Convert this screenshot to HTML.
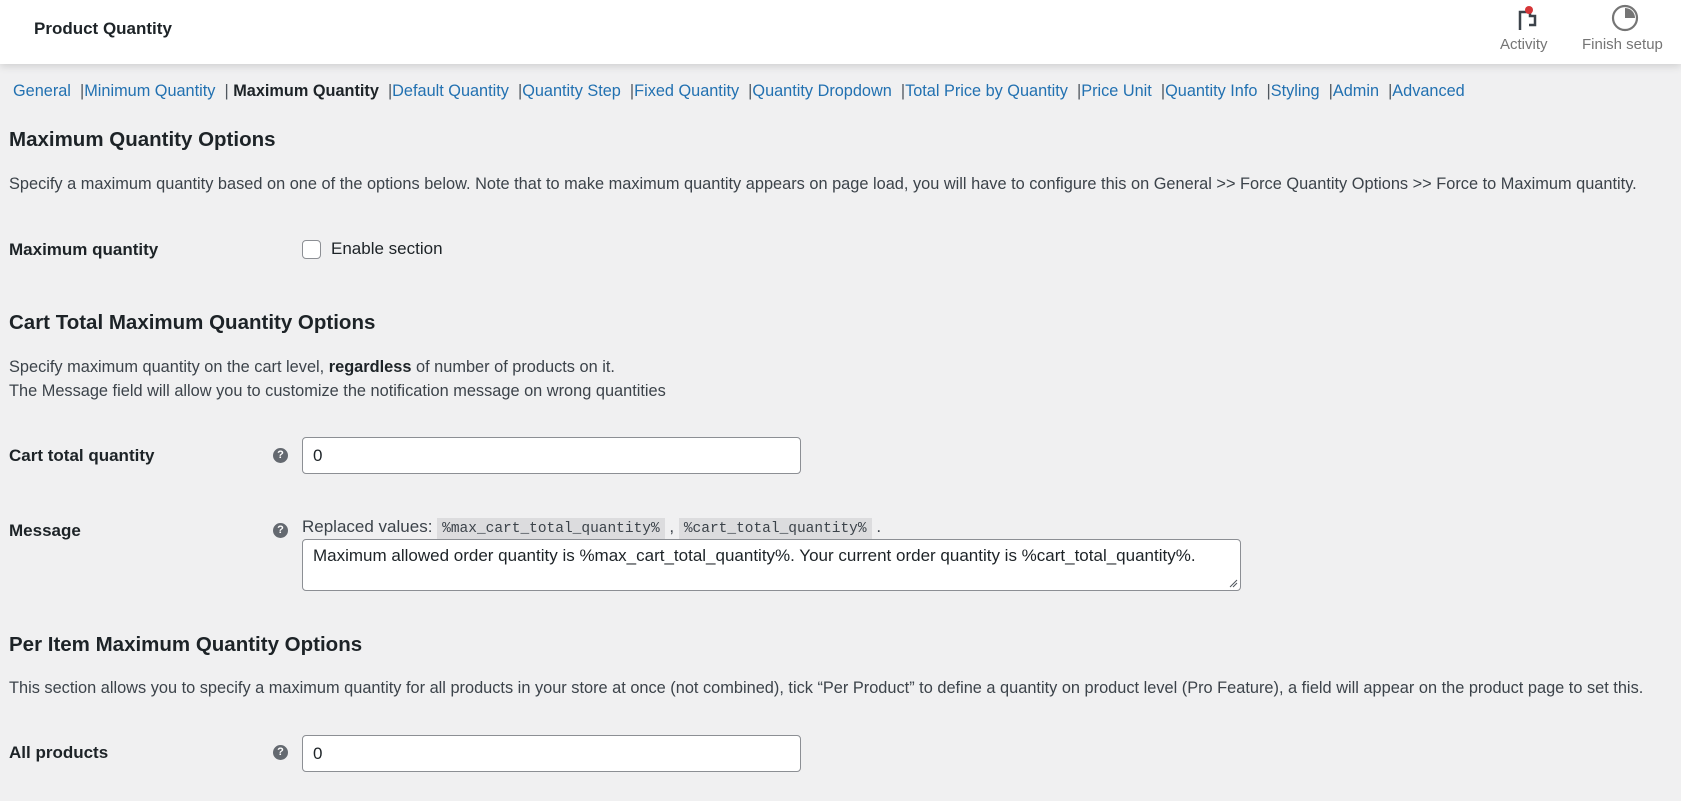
<!DOCTYPE html>
<html><head><meta charset="utf-8"><style>
*{box-sizing:border-box;margin:0;padding:0}
body{width:1681px;height:801px;overflow:hidden;background:#f0f0f1;font-family:"Liberation Sans",sans-serif;color:#1d2327;position:relative}
.hdr{position:absolute;left:0;top:0;width:1681px;height:64px;background:#fff;box-shadow:0 2px 8px rgba(0,0,0,.15)}
.a{position:absolute;white-space:nowrap}
.nav{position:absolute;left:13px;top:82px;font-size:16.3px;color:#50575e;white-space:nowrap}
.nav a{color:#2271b1;text-decoration:none}
.nav b{font-weight:bold;color:#1d2327}
h2{position:absolute;left:9px;font-size:20.5px;font-weight:600;white-space:nowrap}
.d{position:absolute;left:9px;font-size:16.35px;color:#3c434a;white-space:nowrap}
.lbl{position:absolute;left:9px;font-size:17px;font-weight:bold;color:#1d2327}
.q{position:absolute;left:273px;width:15px;height:15px;border-radius:50%;background:#646970;color:#fff;font-size:11px;font-weight:bold;text-align:center;line-height:15px}
.inp{position:absolute;left:302px;width:499px;height:37px;background:#fff;border:1px solid #8c8f94;border-radius:4px;font-size:17px;padding:8px 10px}
code{background:#dcdcde;font-family:"Liberation Mono",monospace;font-size:14.5px;padding:3px 5px}
</style></head><body>
<div class="hdr">
<div class="a" style="left:34px;top:19px;font-size:17px;font-weight:600">Product Quantity</div>
<svg class="a" style="left:1515px;top:4px" width="24" height="28" viewBox="0 0 24 28"><path d="M5 26V8h10v4h5v9h-6" fill="none" stroke="#3c434a" stroke-width="2.5"/><circle cx="14" cy="6" r="4" fill="#d63638"/></svg>
<div class="a" style="left:1500px;top:36px;font-size:15px;color:#757575">Activity</div>
<svg class="a" style="left:1610px;top:3px" width="30" height="30" viewBox="0 0 30 30"><circle cx="15" cy="15" r="12" fill="none" stroke="#757575" stroke-width="2.2"/><path d="M15 5A10 10 0 0 1 25 15H15Z" fill="#757575"/></svg>
<div class="a" style="left:1582px;top:36px;font-size:15px;color:#757575">Finish setup</div>
</div>
<div class="nav"><a>General</a> &nbsp;|<a>Minimum Quantity</a> &nbsp;|&nbsp;<b>Maximum Quantity</b> &nbsp;|<a>Default Quantity</a> &nbsp;|<a>Quantity Step</a> &nbsp;|<a>Fixed Quantity</a> &nbsp;|<a>Quantity Dropdown</a> &nbsp;|<a>Total Price by Quantity</a> &nbsp;|<a>Price Unit</a> &nbsp;|<a>Quantity Info</a> &nbsp;|<a>Styling</a> &nbsp;|<a>Admin</a> &nbsp;|<a>Advanced</a></div>
<h2 style="top:128px">Maximum Quantity Options</h2>
<div class="d" style="top:175px">Specify a maximum quantity based on one of the options below. Note that to make maximum quantity appears on page load, you will have to configure this on General &gt;&gt; Force Quantity Options &gt;&gt; Force to Maximum quantity.</div>
<div class="lbl" style="top:240px">Maximum quantity</div>
<div class="a" style="left:302px;top:240px;width:19px;height:19px;border:1px solid #8c8f94;border-radius:4px;background:#fff"></div>
<div class="a" style="left:331px;top:239px;font-size:17px">Enable section</div>
<h2 style="top:311px">Cart Total Maximum Quantity Options</h2>
<div class="d" style="top:358px">Specify maximum quantity on the cart level, <b style="color:#1d2327">regardless</b> of number of products on it.</div>
<div class="d" style="top:382px">The Message field will allow you to customize the notification message on wrong quantities</div>
<div class="lbl" style="top:446px">Cart total quantity</div>
<div class="q" style="top:448px">?</div>
<div class="inp" style="top:437px">0</div>
<div class="lbl" style="top:521px">Message</div>
<div class="q" style="top:523px">?</div>
<div class="a" style="left:302px;top:517px;font-size:17px;color:#3c434a">Replaced values: <code>%max_cart_total_quantity%</code> , <code>%cart_total_quantity%</code> .</div>
<div class="inp" style="top:539px;width:939px;height:52px;padding:6px 10px">Maximum allowed order quantity is %max_cart_total_quantity%. Your current order quantity is %cart_total_quantity%.
<svg style="position:absolute;right:2px;bottom:2px" width="9" height="9"><path d="M1 8L8 1M4 8L8 4" stroke="#50575e" stroke-width="1"/></svg></div>
<h2 style="top:633px">Per Item Maximum Quantity Options</h2>
<div class="d" style="top:679px">This section allows you to specify a maximum quantity for all products in your store at once (not combined), tick “Per Product” to define a quantity on product level (Pro Feature), a field will appear on the product page to set this.</div>
<div class="lbl" style="top:743px">All products</div>
<div class="q" style="top:745px">?</div>
<div class="inp" style="top:735px">0</div>
</body></html>
